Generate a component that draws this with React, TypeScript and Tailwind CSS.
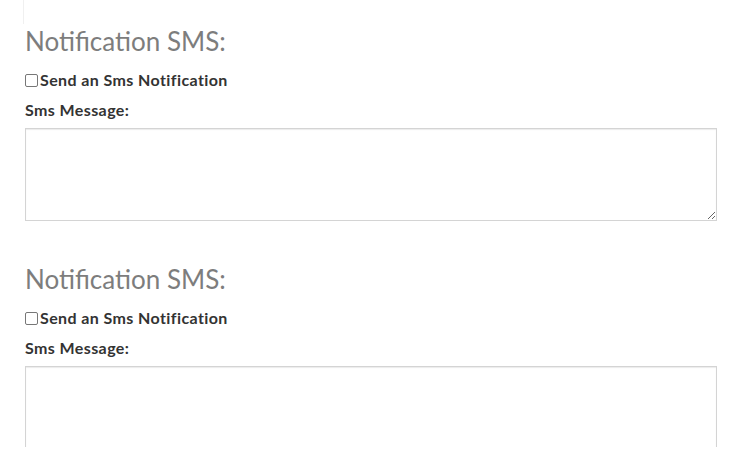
function SmsSection() {
    return (
        <div>
            <h3 className="text-[26px] leading-[34px] font-normal text-[#7d7d7d]">Notification SMS:</h3>
            <label className="mt-[12px] flex items-center text-[16px] leading-[20px] font-bold tracking-[0.4px] text-[#333]">
                <span className="w-[13px] h-[13px] border border-[#777] rounded-[2px] mr-[2px] bg-white" />
                Send an Sms Notification
            </label>
            <p className="mt-[10px] text-[16px] leading-[20px] font-bold tracking-[0.4px] text-[#333]">Sms Message:</p>
            <textarea
                className="mt-[8px] block w-full h-[93px] border border-[#d4d4d4] shadow-[inset_0_1px_1px_rgba(0,0,0,0.08)] bg-white outline-none"
            />
        </div>
    );
}

export default function App() {
    return (
        <div className="w-[743px] h-[467px] bg-white overflow-hidden" style={{ fontFamily: 'Lato, "Open Sans", sans-serif' }}>
            <div className="h-[447px] overflow-hidden pl-[25px] pr-[26px]">
                <div className="h-[24px] -ml-[2px] border-l border-[#f0f0f0]" />
                <SmsSection />
                <div className="h-[41px]" />
                <SmsSection />
            </div>
        </div>
    );
}
